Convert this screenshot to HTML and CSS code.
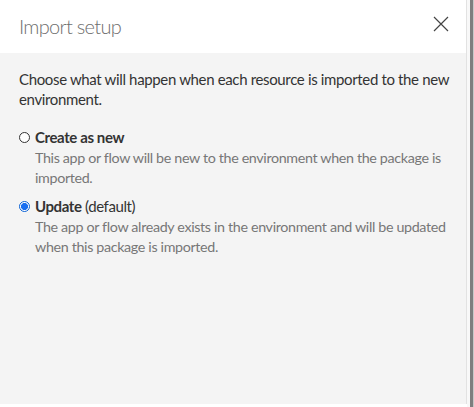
FILE: index.html
```html
<!DOCTYPE html>
<html lang="en">
<head>
<meta charset="utf-8">
<title>Import setup</title>
<link rel="stylesheet" href="styles.css">
</head>
<body>
<div class="frame">
  <div class="panel">
    <header class="header">
      <h1 class="title">Import setup</h1>
      <button class="close" aria-label="Close">
        <svg width="16" height="16" viewBox="0 0 16 16"><path d="M1 1 L15 15 M15 1 L1 15" stroke="#444" stroke-width="1.2" fill="none"/></svg>
      </button>
    </header>
    <main class="body">
      <p class="intro">Choose what will happen when each resource is imported to the new environment.</p>
      <div class="option">
        <div class="option-head">
          <span class="radio"></span>
          <span class="label"><b>Create as new</b></span>
        </div>
        <p class="desc">This app or flow will be new to the environment when the package is imported.</p>
      </div>
      <div class="option">
        <div class="option-head">
          <span class="radio checked"></span>
          <span class="label"><b>Update</b> (default)</span>
        </div>
        <p class="desc">The app or flow already exists in the environment and will be updated when this package is imported.</p>
      </div>
    </main>
  </div>
  <div class="gap"></div>
  <div class="edge"></div>
</div>
</body>
</html>
```
FILE: styles.css
```css
html, body {
  margin: 0;
  padding: 0;
  background: #ffffff;
}
body {
  font-family: "Lato", "Open Sans", sans-serif;
  width: 474px;
  height: 407px;
  overflow: hidden;
}
.frame {
  display: flex;
  height: 407px;
}
.panel {
  width: 466px;
  height: 404px;
  display: flex;
  flex-direction: column;
  border-right: 1px solid #e2e2e2;
  box-shadow: inset 3px 0 3px -2px #e8e8e8;
}
.gap {
  width: 3px;
  background: #f8f8f8;
}
.edge {
  width: 3px;
  background: #7e7e7e;
  border-right: 1px solid #c8c8c8;
}
.header {
  height: 53px;
  background: #ffffff;
  display: flex;
  align-items: center;
  justify-content: space-between;
  padding: 0 17px 0 19px;
  box-sizing: border-box;
}
.title {
  margin: 0;
  font-weight: 300;
  font-size: 20px;
  letter-spacing: -0.7px;
  color: #6e6e6e;
  padding-bottom: 2px;
}
.close {
  border: 0;
  background: transparent;
  padding: 0;
  width: 16px;
  height: 16px;
  display: flex;
  margin-bottom: 5px;
}
.body {
  flex: 1;
  background: #f4f4f4;
  padding: 16px 8px 0 19px;
}
.intro {
  margin: 0 0 18px 0;
  font-size: 15px;
  letter-spacing: -0.35px;
  line-height: 20px;
  color: #333333;
}
.option {
  margin-bottom: 8px;
}
.option-head {
  display: flex;
  align-items: center;
  gap: 5px;
  height: 20px;
}
.radio {
  width: 9px;
  height: 9px;
  border: 1px solid #333;
  border-radius: 50%;
  background: #fff;
  box-sizing: content-box;
}
.radio.checked {
  border-color: #0a62d6;
  background: radial-gradient(circle, #1a6ff0 0 3.3px, #fff 3.8px);
}
.label {
  font-size: 15px;
  letter-spacing: -0.4px;
  color: #333;
}
.label b {
  font-weight: 700;
}
.desc {
  margin: 1px 0 0 16px;
  font-size: 14.3px;
  letter-spacing: -0.35px;
  line-height: 20px;
  color: #777777;
  font-weight: 400;
}
```
